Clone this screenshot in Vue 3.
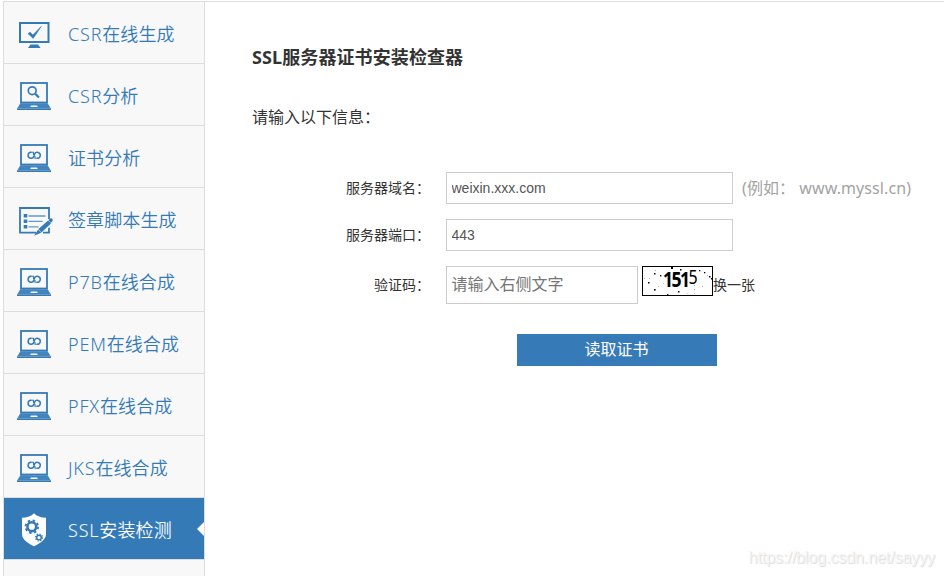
<template>
  <div class="page">
    <ul class="sidebar">
      <li v-for="item in menu" :key="item.code + item.label" :class="{ active: item.icon === current }">
        <svg class="icon" viewBox="0 0 40 40" width="40" height="40">
          <g v-if="item.icon === 'monitor'">
            <rect x="5" y="9" width="28.5" height="19" fill="none" stroke="currentColor" stroke-width="2" />
            <path d="M13 19.6l2.2-1.4 2.6 2.8 8.4-8.6-8 12z" fill="currentColor" stroke="currentColor" stroke-width=".6" />
            <path d="M15.5 30.5h7.5l2.6 3.5H13z" fill="currentColor" />
          </g>
          <g v-else-if="item.icon === 'list'">
            <path d="M34 19V8H5v24.7h16M28 32.7h6v-5" fill="none" stroke="currentColor" stroke-width="1.8" />
            <path d="M8.7 14h3.6v3.4H8.7zM8.7 19.5h3.6v3.4H8.7zM8.7 25h3.6v3.4H8.7z" fill="currentColor" />
            <path d="M13.5 16h17M13.5 21.4h14M13.5 26.8h10" stroke="currentColor" stroke-width="1.3" opacity=".75" />
            <path d="M19 35.8l4.2-6.4 3 3.3zM23.5 29.1l9.6-8.7 2.8 3.2-9.5 8.8zM33.400 20.100l2.300-1.900q1.200-.3 2 1.200.3.900-.2 1.700l-1.700 1.800z" fill="currentColor" />
          </g>
          <g v-else-if="item.icon === 'shield'">
            <path d="M19 3.2C16.5 6.2 12 7.5 7 7.8V24c0 6 6.5 9.5 12 12.3 5.5-2.8 12-6.3 12-12.3V7.8C26 7.5 21.5 6.2 19 3.2z" fill="currentColor" />
            <g fill="none" class="gear">
              <circle cx="16.8" cy="16.7" r="4.4" stroke-width="2.6" />
              <circle cx="16.8" cy="16.7" r="6.3" stroke-width="1.8" stroke-dasharray="2.475 2.475" />
              <circle cx="24" cy="27.5" r="2.3" stroke-width="1.5" />
              <circle cx="24" cy="27.5" r="3.5" stroke-width="1.2" stroke-dasharray="1.375 1.375" />
            </g>
          </g>
          <g v-else>
            <rect x="6" y="7" width="26" height="19.5" fill="none" stroke="currentColor" stroke-width="1.8" />
            <path d="M5.3 27.2h27.4l2.8 4.9h-33z" fill="currentColor" opacity=".92" />
            <path d="M2 32.2h34V34H2z" fill="currentColor" />
            <path d="M16 29.5h6l.8 1.6h-7.6z" class="notch" />
            <g v-if="item.icon === 'search'" fill="none" stroke="currentColor">
              <circle cx="17.2" cy="14.7" r="3.9" stroke-width="1.7" />
              <path d="M20.3 17.7l3.6 3.8" stroke-width="2.2" />
            </g>
            <g v-else fill="none" stroke="currentColor" stroke-width="1.5">
              <path d="M16.2 14.3a3 3 0 1 0 2.700 4.100l.7-2.500a3 3 0 1 1 2.600 4.400" />
              <path d="M15.500 14.300h3v2.800M23 20.300h-3v-2.400" stroke-width="1.100" />
            </g>
          </g>
        </svg>
        <span class="label"><b>{{ item.code }}</b>{{ item.label }}</span>
      </li>
      <li></li>
    </ul>

    <div class="content">
      <h1>SSL服务器证书安装检查器</h1>
      <p class="tip">请输入以下信息：</p>
      <form @submit.prevent>
        <div class="row">
          <label>服务器域名：</label>
          <input v-model="domain" type="text" />
          <span class="example">(例如： www.myssl.cn)</span>
        </div>
        <div class="row">
          <label>服务器端口：</label>
          <input v-model="port" type="text" />
        </div>
        <div class="row code-row">
          <label>验证码：</label>
          <input v-model="code" class="code" type="text" placeholder="请输入右侧文字" />
          <div class="captcha">
            <svg class="noise" viewBox="0 0 69 28" width="69" height="28">
              <rect v-for="(dot, i) in dots" :key="i" :x="dot[0]" :y="dot[1]" :width="dot[2]" :height="dot[2]" :opacity="dot[3]" />
            </svg>
            <div class="digits"><strong>151</strong><span>5</span></div>
          </div>
          <a class="change">换一张</a>
        </div>
        <button type="submit">读取证书</button>
      </form>
    </div>
    <div class="watermark">https://blog.csdn.net/sayyy</div>
  </div>
</template>

<script setup>
import { ref } from "vue";

const menu = [
  { code: "CSR", label: "在线生成", icon: "monitor" },
  { code: "CSR", label: "分析", icon: "search" },
  { code: "", label: "证书分析", icon: "laptop" },
  { code: "", label: "签章脚本生成", icon: "list" },
  { code: "P7B", label: "在线合成", icon: "laptop" },
  { code: "PEM", label: "在线合成", icon: "laptop" },
  { code: "PFX", label: "在线合成", icon: "laptop" },
  { code: "JKS", label: "在线合成", icon: "laptop" },
  { code: "SSL", label: "安装检测", icon: "shield" }
];

const current = ref("shield");
const domain = ref("weixin.xxx.com");
const port = ref("443");
const code = ref("");

// x, y, size, opacity
const dots = [
  [5, 15, 1.5, 1], [11, 6, 1.5, 1], [11, 22, 1.6, 1], [17, 8, 1.4, 1],
  [28, 0, 2, 1], [24, 27, 1.5, 0.8], [35, 24, 1.5, 1], [37, 2, 1.5, 1],
  [56, 3, 1.3, 1], [61, 5, 1.3, 1], [66, 9, 1.5, 1], [68, 11, 1.5, 1],
  [1, 11, 1, 0.3], [6, 11, 1, 0.3], [15, 19, 1, 0.25], [51, 18, 1, 0.3],
  [51, 22, 1, 0.3], [51, 26, 1, 0.2], [59, 19, 1, 0.3], [12, 3, 1, 0.3],
  [20, 16, 1, 0.2], [44, 26, 1, 0.2], [64, 8, 1, 0.3]
];
</script>

<style>
body {
  background: #fff;
  overflow: hidden;
}
</style>

<style scoped>
.page {
  display: flex;
  box-sizing: border-box;
  height: 575px;
  margin: 1px 0 0 3px;
  border-top: 1px solid #ddd;
  overflow: hidden;
  color: #333;
  font-family: "Noto Sans", "Noto Sans CJK SC", sans-serif;
}

.sidebar {
  flex: none;
  width: 200px;
  margin: 0;
  padding: 0;
  list-style: none;
  background: #f8f8f8;
  border-left: 1px solid #ddd;
  border-right: 1px solid #ddd;
}

.sidebar li {
  position: relative;
  display: flex;
  align-items: center;
  gap: 13px;
  box-sizing: border-box;
  height: 62px;
  padding-left: 11px;
  border-bottom: 1px solid #ddd;
  color: #337ab7;
  font-size: 18px;
  line-height: 24px;
  cursor: pointer;
}

.label {
  padding-top: 3px;
  font-weight: 350;
  letter-spacing: 0.1px;
  white-space: nowrap;
}

.label b {
  font-weight: 360;
  letter-spacing: 0.8px;
}

.sidebar .active {
  background: #337ab7;
  color: #fff;
}

.active::after {
  content: "";
  position: absolute;
  right: 0;
  top: 24px;
  border: 7px solid transparent;
  border-right-color: #fff;
  border-left: 0;
}

.icon {
  flex: none;
  margin-top: 3px;
}

.gear {
  stroke: #337ab7;
}

.notch {
  fill: #f8f8f8;
}

.content {
  flex: 1;
  padding: 42px 0 0 47px;
}

h1 {
  margin: 0;
  font-size: 18px;
  line-height: 26px;
  letter-spacing: 0.1px;
}

.tip {
  margin: 35px 0 42px;
  font-size: 16px;
  line-height: 25px;
}

.row {
  display: flex;
  align-items: center;
  height: 32px;
  margin-bottom: 15px;
}

label {
  width: 178px;
  margin-right: 16px;
  text-align: right;
  font-size: 14px;
  line-height: 20px;
}

input {
  box-sizing: border-box;
  width: 287px;
  height: 32px;
  padding: 0 4.5px;
  border: 1px solid #ccc;
  outline: none;
  color: #555;
  background: #fff;
  font: 14px "Liberation Sans", "Noto Sans CJK SC", sans-serif;
}

.example {
  margin-left: 9px;
  color: #a3a3a3;
  font-size: 16px;
  line-height: 24px;
  letter-spacing: 0.08px;
  white-space: pre;
}

.code-row {
  height: 38px;
  margin-bottom: 30px;
}

.code {
  width: 192px;
  height: 38px;
  font-size: 16px;
}

.code::placeholder {
  color: #757575;
}

.captcha {
  position: relative;
  align-self: flex-start;
  box-sizing: border-box;
  width: 71px;
  height: 30px;
  margin-left: 4px;
  padding-left: 20px;
  border: 1px solid #000;
  color: #000;
}

.digits {
  display: flex;
  font-size: 22px;
  line-height: 23px;
  transform: scaleX(0.8);
  transform-origin: 0 0;
}

.digits strong {
  letter-spacing: -2px;
}

.digits span {
  font-size: 20px;
  line-height: 20px;
}

.noise {
  position: absolute;
  left: 0;
  top: 0;
}

.change {
  font-size: 14px;
  line-height: 20px;
  cursor: pointer;
}

button {
  display: block;
  width: 200px;
  height: 32px;
  margin-left: 265px;
  padding: 0 1px 2px 0;
  border: 0;
  background: #377ab8;
  color: #fff;
  font: 16px/30px "Noto Sans", "Noto Sans CJK SC", sans-serif;
  cursor: pointer;
}

/* sits over the page corner */
.watermark {
  position: absolute;
  right: 9px;
  bottom: 9px;
  color: #f4f4f4;
  font: 16px/18px "Liberation Sans", sans-serif;
  letter-spacing: -0.08px;
  text-shadow: 1px 1px 1px #dadada;
}
</style>
